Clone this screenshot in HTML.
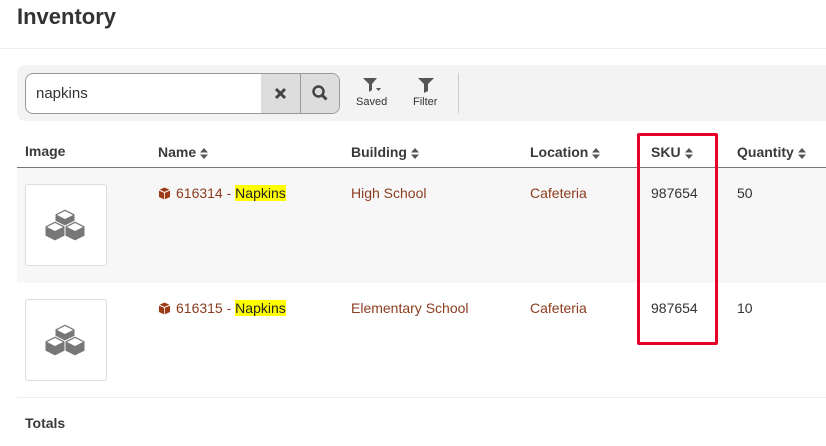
<!DOCTYPE html>
<html><head><style>
body{margin:0;width:826px;height:446px;overflow:hidden;background:#fff;font-family:"Liberation Sans",Arial,sans-serif;color:#333;position:relative}
.a{position:absolute}
.hd{font-size:14px;font-weight:bold;color:#3a3a3a}
.br{color:#8b3d1f;font-size:14px}
.t{font-size:14px;color:#333}
.s{display:inline-block;margin-left:4px;vertical-align:middle}
</style></head><body>
<div class="a" style="left:17px;top:4px;font-size:22px;font-weight:bold;color:#333">Inventory</div>
<div class="a" style="left:0;top:48px;width:826px;height:1px;background:#eee"></div>
<div class="a" style="left:17px;top:65px;width:820px;height:56px;background:#f3f3f3;border-radius:8px"></div>
<div class="a" style="left:25px;top:73px;width:313px;height:39px;border:1px solid #999;border-radius:8px;background:#fff;overflow:hidden">
 <div class="a" style="left:10px;top:11px;font-size:15px;color:#333">napkins</div>
 <div class="a" style="left:235px;top:0;width:39px;height:39px;background:#ddd;border-right:1px solid #999"></div>
 <div class="a" style="left:275px;top:0;width:39px;height:39px;background:#ddd"></div>
 <svg class="a" style="left:248px;top:13px" width="13" height="13"><path d="M2 2L11 11M11 2L2 11" stroke="#444" stroke-width="3"/></svg>
 <svg class="a" style="left:285px;top:10px" width="18" height="18"><circle cx="7.5" cy="7.5" r="5" fill="none" stroke="#444" stroke-width="2.5"/><path d="M11 11L15.5 15.5" stroke="#444" stroke-width="3"/></svg>
</div>
<svg class="a" style="left:362px;top:77px" width="20" height="16"><path d="M1 1H15L10 7V13L7 15V7Z" fill="#555"/><path d="M14 11H19L16.5 14Z" fill="#555"/></svg>
<div class="a" style="left:356px;top:96px;font-size:11px;color:#333">Saved</div>
<svg class="a" style="left:418px;top:77px" width="16" height="16"><path d="M0 1H16L10 7V14L6 16V7Z" fill="#555"/></svg>
<div class="a" style="left:413px;top:96px;font-size:11px;color:#333">Filter</div>
<div class="a" style="left:458px;top:73px;width:1px;height:40px;background:#ccc"></div>

<div class="a hd" style="left:25px;top:143px">Image</div>
<div class="a hd" style="left:158px;top:144px">Name<svg class="s" width="8" height="11"><path d="M0 4.5L4 0L8 4.5ZM0 6.5L4 11L8 6.5Z" fill="#555"/></svg></div>
<div class="a hd" style="left:351px;top:144px">Building<svg class="s" width="8" height="11"><path d="M0 4.5L4 0L8 4.5ZM0 6.5L4 11L8 6.5Z" fill="#555"/></svg></div>
<div class="a hd" style="left:530px;top:144px">Location<svg class="s" width="8" height="11"><path d="M0 4.5L4 0L8 4.5ZM0 6.5L4 11L8 6.5Z" fill="#555"/></svg></div>
<div class="a hd" style="left:651px;top:144px">SKU<svg class="s" width="8" height="11"><path d="M0 4.5L4 0L8 4.5ZM0 6.5L4 11L8 6.5Z" fill="#555"/></svg></div>
<div class="a hd" style="left:737px;top:144px">Quantity<svg class="s" width="8" height="11"><path d="M0 4.5L4 0L8 4.5ZM0 6.5L4 11L8 6.5Z" fill="#555"/></svg></div>
<div class="a" style="left:17px;top:167px;width:809px;height:1px;background:#777"></div>

<div class="a" style="left:17px;top:168px;width:809px;height:115px;background:#f7f7f7"></div>
<div class="a" style="left:17px;top:397px;width:809px;height:1px;background:#eee"></div>

<div class="a" style="left:25px;top:184px;width:80px;height:80px;border:1px solid #ddd;border-radius:3px;background:#fff"></div>
<div class="a" style="left:25px;top:299px;width:80px;height:80px;border:1px solid #ddd;border-radius:3px;background:#fff"></div>
<svg class="a" style="left:44px;top:207px" width="42" height="36" viewBox="0 0 42 36"><g fill="#777" stroke="#fff" stroke-width="1"><path d="M11 7L21 2L31 7V17L21 22L11 17Z"/><path d="M1 19L11 14L21 19V29L11 34L1 29Z"/><path d="M21 19L31 14L41 19V29L31 34L21 29Z"/></g><g fill="#fff"><path d="M13 8L21 4L29 8L21 12Z"/><path d="M3 20L11 16L19 20L11 24Z"/><path d="M23 20L31 16L39 20L31 24Z"/></g></svg>
<svg class="a" style="left:44px;top:322px" width="42" height="36" viewBox="0 0 42 36"><g fill="#777" stroke="#fff" stroke-width="1"><path d="M11 7L21 2L31 7V17L21 22L11 17Z"/><path d="M1 19L11 14L21 19V29L11 34L1 29Z"/><path d="M21 19L31 14L41 19V29L31 34L21 29Z"/></g><g fill="#fff"><path d="M13 8L21 4L29 8L21 12Z"/><path d="M3 20L11 16L19 20L11 24Z"/><path d="M23 20L31 16L39 20L31 24Z"/></g></svg>

<svg class="a" style="left:158px;top:187px" width="13" height="13"><path d="M1 3L6.5 0.5L12 3V10L6.5 12.5L1 10Z" fill="#9c3a17"/><path d="M1 3L6.5 5.5L12 3" stroke="#fff" fill="none" stroke-width="1"/><path d="M6.5 5.5V12.5" stroke="#fff" stroke-width="0.8"/></svg>
<div class="a br" style="left:176px;top:185px">616314 - <span style="background:#ffff00;color:#222">Napkins</span></div>
<div class="a br" style="left:351px;top:185px">High School</div>
<div class="a br" style="left:530px;top:185px">Cafeteria</div>
<div class="a t" style="left:651px;top:185px">987654</div>
<div class="a t" style="left:737px;top:185px">50</div>

<svg class="a" style="left:158px;top:302px" width="13" height="13"><path d="M1 3L6.5 0.5L12 3V10L6.5 12.5L1 10Z" fill="#9c3a17"/><path d="M1 3L6.5 5.5L12 3" stroke="#fff" fill="none" stroke-width="1"/><path d="M6.5 5.5V12.5" stroke="#fff" stroke-width="0.8"/></svg>
<div class="a br" style="left:176px;top:300px">616315 - <span style="background:#ffff00;color:#222">Napkins</span></div>
<div class="a br" style="left:351px;top:300px">Elementary School</div>
<div class="a br" style="left:530px;top:300px">Cafeteria</div>
<div class="a t" style="left:651px;top:300px">987654</div>
<div class="a t" style="left:737px;top:300px">10</div>

<div class="a hd" style="left:25px;top:415px">Totals</div>

<div class="a" style="left:637px;top:133px;width:75px;height:206px;border:3px solid #e8002a;border-radius:2px"></div>
</body></html>
